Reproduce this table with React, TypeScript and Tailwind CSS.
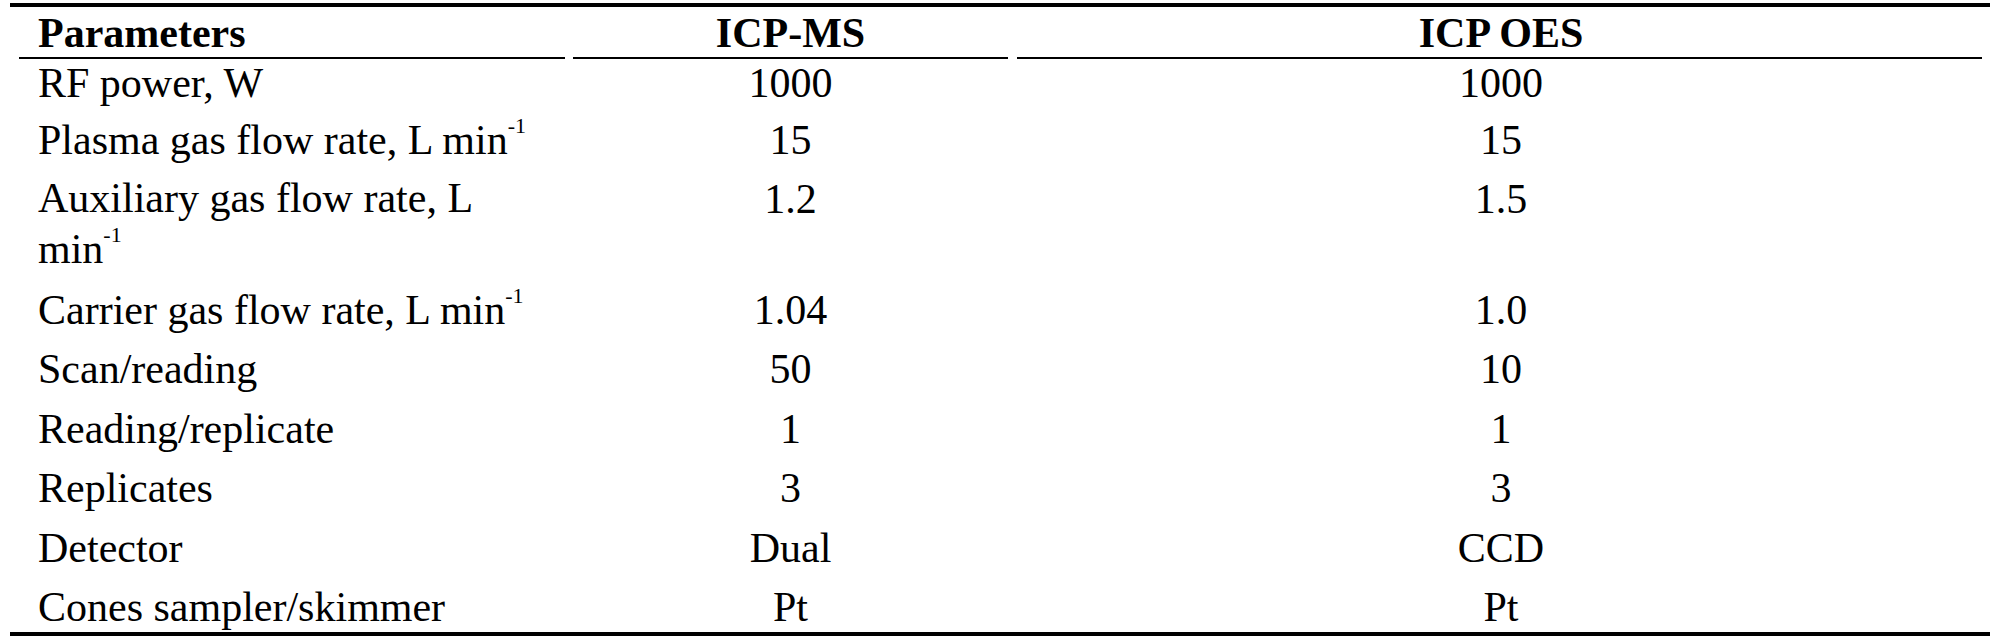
const ROWS: { label: React.ReactNode; ms: string; oes: string; h: string; pt: string; lead?: string }[] = [
  { label: 'RF power, W', ms: '1000', oes: '1000', h: 'h-[49px]', pt: 'pt-[2.8px]' },
  {
    label: (
      <>
        Plasma gas flow rate, L min<Sup />
      </>
    ),
    ms: '15',
    oes: '15',
    h: 'h-[58px]',
    pt: 'pt-[10.8px]',
  },
  {
    label: (
      <>
        Auxiliary gas flow rate, L
        <br />
        min<Sup />
      </>
    ),
    ms: '1.2',
    oes: '1.5',
    h: 'h-[108px]',
    pt: 'pt-[11.8px]',
    lead: 'pt-[7.4px] leading-[51px]',
  },
  {
    label: (
      <>
        Carrier gas flow rate, L min<Sup />
      </>
    ),
    ms: '1.04',
    oes: '1.0',
    h: 'h-[59px]',
    pt: 'pt-[14.8px]',
  },
  { label: 'Scan/reading', ms: '50', oes: '10', h: 'h-[60px]', pt: 'pt-[14.8px]' },
  { label: 'Reading/replicate', ms: '1', oes: '1', h: 'h-[59px]', pt: 'pt-[14.8px]' },
  { label: 'Replicates', ms: '3', oes: '3', h: 'h-[60px]', pt: 'pt-[14.8px]' },
  { label: 'Detector', ms: 'Dual', oes: 'CCD', h: 'h-[59px]', pt: 'pt-[14.8px]' },
  { label: 'Cones sampler/skimmer', ms: 'Pt', oes: 'Pt', h: 'h-[61px]', pt: 'pt-[14.8px]' },
];

function Sup() {
  return <span className="relative -top-[21px] text-[22px]">-1</span>;
}

export default function App() {
  return (
    <div
      className="h-[643px] w-[1996px] bg-white text-[42px] text-black"
      style={{ fontFamily: '"Liberation Serif", "Times New Roman", serif' }}
    >
      <div className="ml-[10px] w-[1980px] pt-[3px]">
        <div className="h-[4px] bg-black" />

        {/* header */}
        <div className="grid h-[52px] grid-cols-[559px_443px_978px] font-bold">
          <div className="flex flex-col justify-between">
            <div className="pl-[28px] pt-[4.8px] leading-[42px]">Parameters</div>
            <div className="ml-[9px] mr-[4px] h-[2px] bg-black" />
          </div>
          <div className="flex flex-col justify-between">
            <div className="pt-[4.8px] text-center leading-[42px]">ICP-MS</div>
            <div className="ml-[4px] mr-[4px] h-[2px] bg-black" />
          </div>
          <div className="flex flex-col justify-between">
            <div className="pt-[4.8px] text-center leading-[42px]">ICP OES</div>
            <div className="ml-[5px] mr-[8px] h-[2px] bg-black" />
          </div>
        </div>

        {ROWS.map((r, i) => (
          <div key={i} className={`grid grid-cols-[559px_443px_978px] ${r.h}`}>
            <div className={`pl-[28px] ${r.lead ?? `${r.pt} leading-[42px]`}`}>{r.label}</div>
            <div className={`${r.pt} text-center leading-[42px]`}>{r.ms}</div>
            <div className={`${r.pt} text-center leading-[42px]`}>{r.oes}</div>
          </div>
        ))}

        <div className="h-[4px] bg-black" />
      </div>
    </div>
  );
}
